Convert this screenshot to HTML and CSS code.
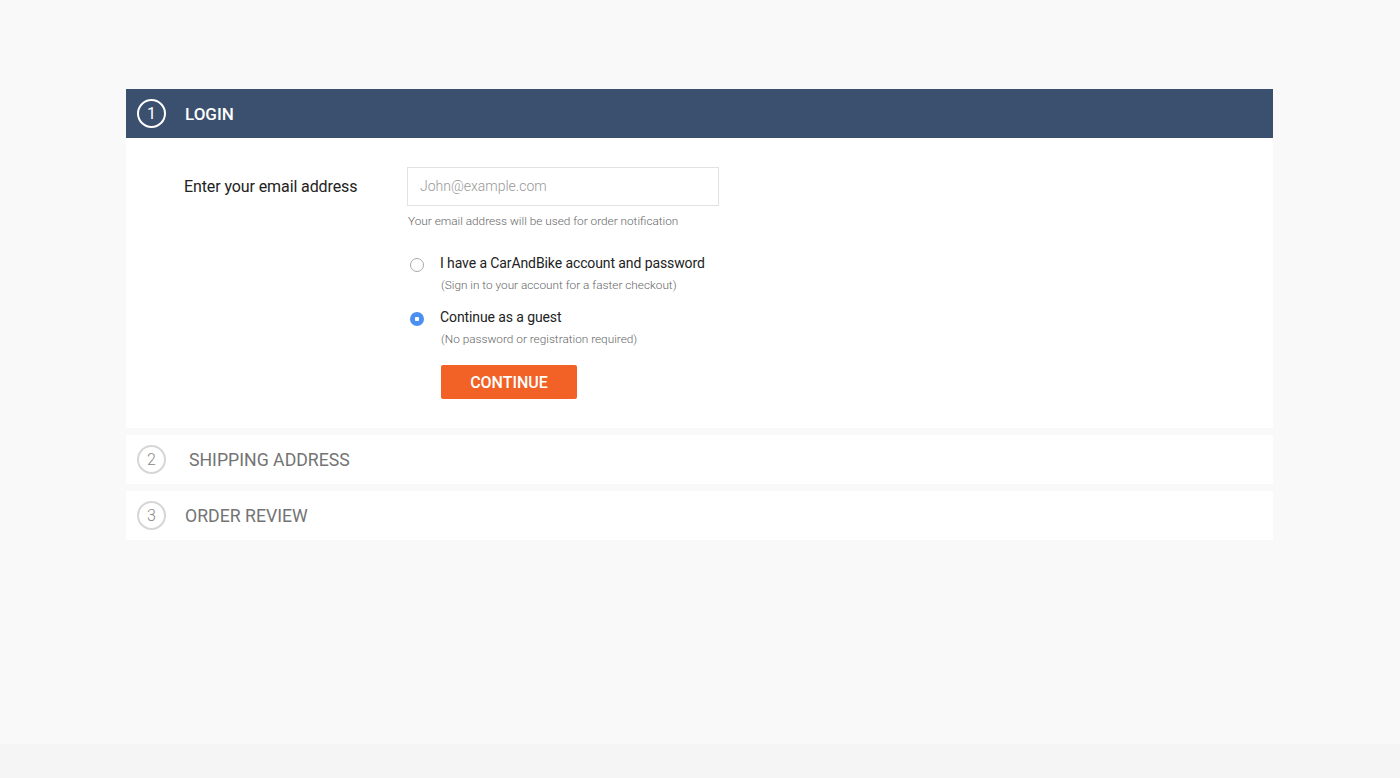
FILE: index.html
```html
<!DOCTYPE html>
<html>
<head>
<meta charset="utf-8">
<link rel="stylesheet" href="styles.css">
</head>
<body>
<div class="page">
  <div class="checkout">
    <section class="step active">
      <div class="step-head">
        <span class="num">1</span>
        <span class="title">LOGIN</span>
      </div>
      <div class="step-body">
        <div class="row">
          <label class="label">Enter your email address</label>
          <div class="fields">
            <div class="input">John@example.com</div>
            <div class="help">Your email address will be used for order notification</div>
            <div class="option">
              <span class="radio"></span>
              <div class="opt-text">
                <div class="opt-main">I have a CarAndBike account and password</div>
                <div class="opt-sub">(Sign in to your account for a faster checkout)</div>
              </div>
            </div>
            <div class="option">
              <span class="radio checked"></span>
              <div class="opt-text">
                <div class="opt-main">Continue as a guest</div>
                <div class="opt-sub">(No password or registration required)</div>
              </div>
            </div>
            <button class="btn">CONTINUE</button>
          </div>
        </div>
      </div>
    </section>
    <section class="step">
      <div class="step-head">
        <span class="num">2</span>
        <span class="title ship">SHIPPING ADDRESS</span>
      </div>
    </section>
    <section class="step">
      <div class="step-head">
        <span class="num">3</span>
        <span class="title">ORDER REVIEW</span>
      </div>
    </section>
  </div>
</div>
<div class="footer-band"></div>
</body>
</html>
```

FILE: styles.css
```css
* { box-sizing: border-box; }
html, body { margin: 0; padding: 0; }
body {
  background: #f9f9f9;
  font-family: Roboto, "Liberation Sans", Arial, sans-serif;
  color: #222;
  height: 778px;
  overflow: hidden;
  display: flex;
  flex-direction: column;
}
.page {
  height: 744px;
  padding: 89px 127px 0 126px;
}
.footer-band {
  flex: 1;
  background: #f5f5f5;
}
.checkout {
  display: flex;
  flex-direction: column;
  gap: 7px;
}
.step {
  background: #fff;
}
.step-head {
  height: 49px;
  display: flex;
  align-items: center;
  padding-left: 11px;
}
.num {
  width: 29px;
  height: 29px;
  border-radius: 50%;
  border: 2px solid #d6d6d6;
  color: #888;
  display: flex;
  align-items: center;
  justify-content: center;
  font-size: 16px;
  font-weight: 300;
  margin-right: 19px;
}
.title {
  font-size: 17.7px;
  color: #747474;
}
.title.ship { margin-left: 4px; }
.step.active .step-head {
  background: #3b4f6e;
}
.step.active .num {
  border-color: #fff;
  color: #fff;
  font-weight: 400;
}
.step.active .title {
  color: #fff;
  font-weight: 500;
  font-size: 17px;
}
.step-body {
  height: 290px;
  padding: 29px 0 0 58px;
}
.row {
  display: flex;
}
.label {
  width: 223px;
  font-size: 16px;
  color: #222;
  padding-top: 10px;
  letter-spacing: -0.1px;
}
.fields {
  display: flex;
  flex-direction: column;
}
.input {
  width: 312px;
  height: 39px;
  border: 1px solid #e2e2e2;
  font-size: 14px;
  color: #999;
  padding: 10px 12px;
  font-weight: 300;
}
.help {
  font-size: 11.8px;
  color: #666;
  font-weight: 300;
  margin-top: 8px;
  margin-left: 1px;
}
.option {
  display: flex;
  margin-top: 27px;
}
.option + .option { margin-top: 17px; }
.radio {
  width: 14px;
  height: 14px;
  border: 1px solid #aaa;
  border-radius: 50%;
  margin: 3px 0 0 3px;
  flex: none;
}
.radio.checked {
  border: none;
  background: radial-gradient(circle, #fff 0 2px, #4a90f0 2.5px);
}
.opt-text { margin-left: 16px; }
.opt-main {
  font-size: 14px;
  color: #222;
  letter-spacing: -0.1px;
}
.opt-sub {
  font-size: 11.8px;
  color: #666;
  font-weight: 300;
  margin-top: 7px;
  margin-left: 1px;
}
.btn {
  align-self: flex-start;
  margin: 19px 0 0 34px;
  width: 136px;
  height: 34px;
  border: none;
  border-radius: 2px;
  background: #f26125;
  color: #fff;
  font-family: Roboto, "Liberation Sans", Arial, sans-serif;
  font-size: 16px;
  font-weight: 500;
  padding: 0;
}
```
